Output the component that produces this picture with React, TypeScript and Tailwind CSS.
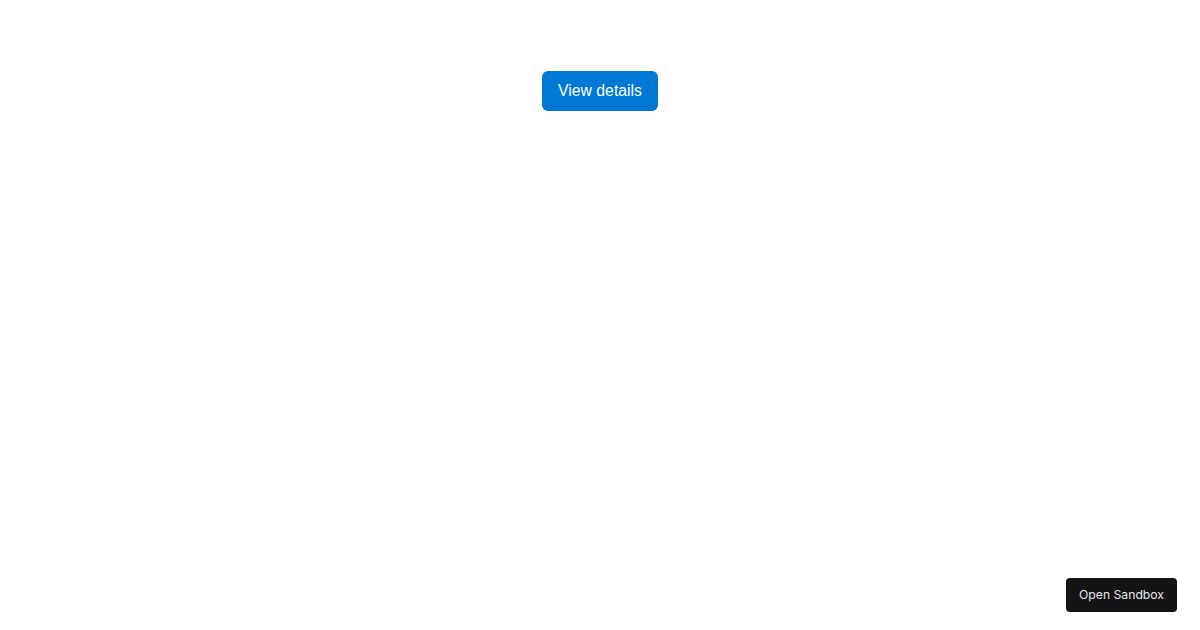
export default function App() {
  return (
    <div className="min-h-screen bg-white font-['Liberation_Sans',Arial,sans-serif]">
      <div className="flex justify-center pt-[71px]">
        <button className="h-10 rounded-md bg-[#0078d4] px-4 text-[15.8px] text-white">
          View details
        </button>
      </div>
      <button className="fixed bottom-[18px] right-[23px] h-[34px] rounded bg-[#141414] px-[13px] font-['Inter',sans-serif] text-[12.2px] text-[#e8e8e8]">
        Open Sandbox
      </button>
    </div>
  );
}
